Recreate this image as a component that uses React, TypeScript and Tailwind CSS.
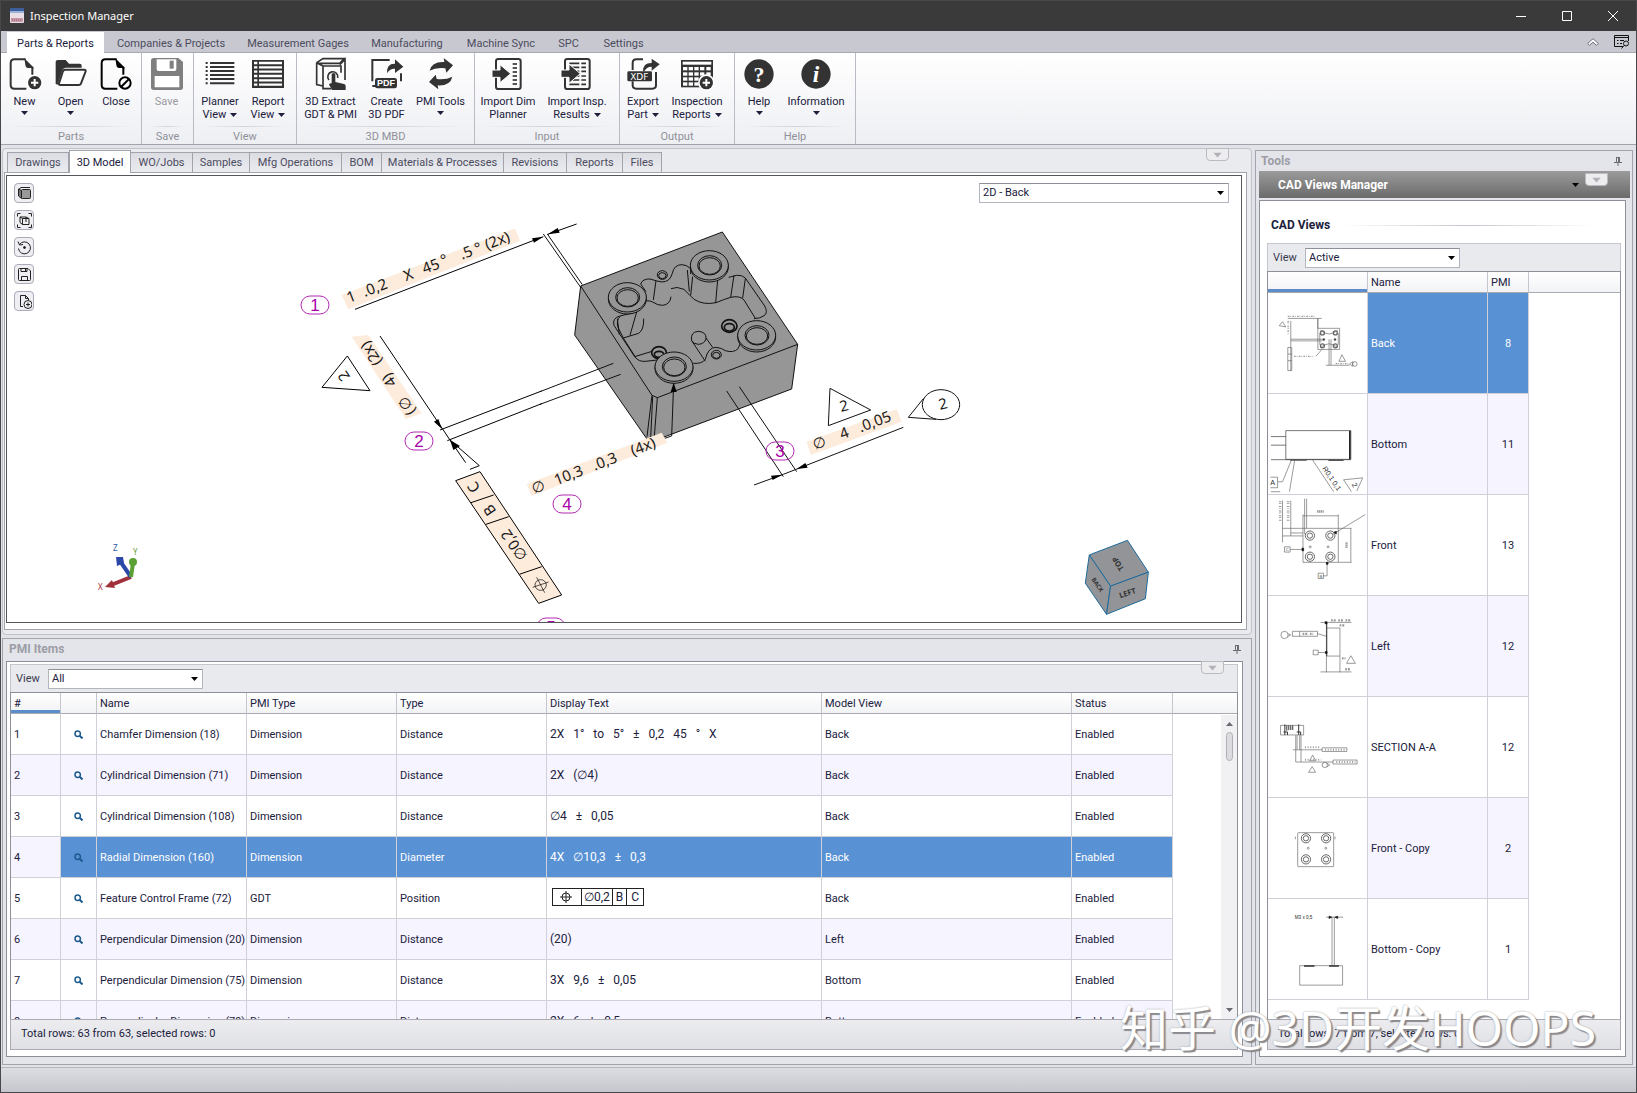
import React, { ReactElement, ReactNode, useState } from 'react'

type IconProps = { children: ReactNode; color?: string }

const RibbonIcon = ({ children, color = '#333333' }: IconProps): ReactElement => (
  <svg viewBox="0 0 96 96" className="size-8 shrink-0 overflow-visible" fill={color} stroke="none" aria-hidden="true">
    {children}
  </svg>
)

const Caret = ({ className = '' }: { className?: string }): ReactElement => (
  <svg viewBox="0 0 7 4" className={`w-[7px] h-1 shrink-0 ${className}`} fill="currentColor" aria-hidden="true">
    <path d="M0 0h7L3.5 4z" />
  </svg>
)

const DocShape = ({ color }: { color: string }): ReactElement => (
  <>
    <path
      d="M50 4H16Q5 4 5 16V80Q5 92 16 92H52M70 26V50"
      fill="none"
      stroke={color}
      strokeWidth="6"
    />
    <path d="M46 1L73 28V34L66 30H56Q49 29 49 21Z" fill={color} />
  </>
)

const ImportArrow = (): ReactElement => (
  <>
    <rect x="12" y="3" width="74" height="90" rx="7" fill="none" stroke="#333" strokeWidth="6" />
    <path d="M0 36h24V20l32 27-32 27V58H0z" stroke="#fff" strokeWidth="3" />
  </>
)

const icons = {
  new: (
    <RibbonIcon>
      <DocShape color="#333333" />
      <circle cx="77" cy="74" r="24" fill="#fff" />
      <circle cx="77" cy="74" r="20" />
      <path d="M77 63v22M66 74h22" stroke="#fff" strokeWidth="6" />
    </RibbonIcon>
  ),
  open: (
    <RibbonIcon>
      <path d="M2 78V12Q2 6 8 6h24l10 11h32q6 0 6 6v6H32q-7 0-10 8L8 80z" />
      <path d="M30 35h58q5 0 4 5L79 74q-2 7-8 7H16q-5 0-4-5l11-34q2-7 7-7z" fill="#fff" stroke="#333" strokeWidth="6" />
    </RibbonIcon>
  ),
  close: (
    <RibbonIcon color="#000000">
      <DocShape color="#000000" />
      <circle cx="75" cy="75" r="23" fill="#fff" />
      <circle cx="75" cy="75" r="17" fill="#fff" stroke="#000" strokeWidth="6" />
      <path d="M87 63L63 87" stroke="#000" strokeWidth="6" />
    </RibbonIcon>
  ),
  save: (
    <RibbonIcon color="#7f7f7f">
      <path d="M8 0h74l14 12v76q0 8-8 8H8q-8 0-8-8V8q0-8 8-8z" />
      <path d="M17 4h59v30q0 5-5 5H22q-5 0-5-5zM11 54h74v34H11z" fill="#fff" />
      <path d="M56 8h12v24H56z" />
    </RibbonIcon>
  ),
  planner: (
    <RibbonIcon>
      {[15, 27, 39, 51, 63, 76].map((y) => (
        <path key={y} d={`M5 ${y}h6M18 ${y}h73`} stroke="#333" strokeWidth="6" />
      ))}
    </RibbonIcon>
  ),
  report: (
    <RibbonIcon>
      <path d="M0 6h96v84H0z" />
      {[13, 26, 39, 52, 65, 78].map((y) => (
        <path key={y} d={`M6 ${y + 2}h10M21 ${y + 2}h69`} stroke="#fff" strokeWidth="7" />
      ))}
    </RibbonIcon>
  ),
  extract: (
    <RibbonIcon>
      <path d="M5 14L24 2H88L74 16H5V80L24 84M5 14L24 24V92H50M24 24H78V44M74 20L90 4V66" fill="none" stroke="#333" strokeWidth="5" />
      <path d="M42 66A15 15 0 1 1 68 60" fill="none" stroke="#333" strokeWidth="5" />
      <path d="M50 48q6-6 11 0v24l26 6q5 1 5 6v12H52L42 80q1-6 8-4z" />
    </RibbonIcon>
  ),
  pdf: (
    <RibbonIcon>
      <path d="M56 6H4V70M4 84h12M90 46V70" fill="none" stroke="#333" strokeWidth="6" />
      <path d="M48 46Q46 16 72 17V4L97 26 72 45V32Q56 31 48 46z" />
      <rect x="12" y="60" width="66" height="31" rx="7" />
      <text x="45" y="85" fill="#fff" fontSize="27" fontWeight="bold" textAnchor="middle" fontFamily="Liberation Sans, sans-serif">PDF</text>
    </RibbonIcon>
  ),
  tools: (
    <RibbonIcon>
      <path d="M14 38Q20 10 58 12L56 0 84 22 64 44 61 31Q32 28 14 38z" />
      <path d="M82 56Q76 84 38 82L40 94 12 72 32 50 35 63Q64 66 82 56z" />
    </RibbonIcon>
  ),
  importDim: (
    <RibbonIcon>
      <ImportArrow />
      {[18, 30, 42, 54, 66, 78].map((y) => (
        <path key={y} d={`M62 ${y}h13`} stroke="#333" strokeWidth="5" />
      ))}
    </RibbonIcon>
  ),
  importInsp: (
    <RibbonIcon>
      <rect x="12" y="3" width="74" height="90" rx="7" fill="none" stroke="#333" strokeWidth="6" />
      {[16, 28, 40, 54, 66, 79].map((y) => (
        <path key={y} d={`M25 ${y}h30M61 ${y}h14`} stroke="#333" strokeWidth="5" />
      ))}
      <path d="M0 36h24V18l34 29-34 29V58H0z" stroke="#fff" strokeWidth="3" />
    </RibbonIcon>
  ),
  exportPart: (
    <RibbonIcon>
      <path d="M48 4H28Q17 4 17 15V36M17 70V82Q17 92 28 92H76Q87 92 87 82V42" fill="none" stroke="#333" strokeWidth="6" />
      <path d="M48 40Q48 14 74 15V2L98 19 74 38V26Q58 26 52 40z" />
      <rect x="1" y="40" width="74" height="30" rx="4" />
      <text x="37" y="65" fill="#fff" fontSize="27" textAnchor="middle" fontFamily="DejaVu Sans, sans-serif">XDF</text>
    </RibbonIcon>
  ),
  inspection: (
    <RibbonIcon>
      <path d="M0 6h96v82H0z" />
      <path d="M5 11h86v9H5z" fill="#fff" />
      {[27, 43, 58, 73].map((y) =>
        [6, 23, 40, 57, 76].map((x) => <rect key={`${x}-${y}`} x={x} y={y} width="13" height="10" fill="#fff" />)
      )}
      <circle cx="76" cy="74" r="25" fill="#fff" />
      <circle cx="76" cy="74" r="20" />
      <path d="M76 63v22M65 74h22" stroke="#fff" strokeWidth="6" />
    </RibbonIcon>
  ),
  help: (
    <RibbonIcon>
      <circle cx="48" cy="48" r="44" />
      <text x="48" y="71" fill="#fff" fontSize="66" fontWeight="bold" textAnchor="middle" fontFamily="Liberation Serif, serif">?</text>
    </RibbonIcon>
  ),
  info: (
    <RibbonIcon>
      <circle cx="48" cy="48" r="44" />
      <text x="48" y="72" fill="#fff" fontSize="70" fontWeight="bold" fontStyle="italic" textAnchor="middle" fontFamily="Liberation Serif, serif">i</text>
    </RibbonIcon>
  ),
}

type RibbonItem = { icon: ReactNode; lines: string[]; menu?: boolean; width: string; disabled?: boolean }

const ribbonGroups: { name: string; width: string; items: RibbonItem[] }[] = [
  {
    name: 'Parts',
    width: 'w-[141px]',
    items: [
      { icon: icons.new, lines: ['New'], menu: true, width: 'w-[46px]' },
      { icon: icons.open, lines: ['Open'], menu: true, width: 'w-[46px]' },
      { icon: icons.close, lines: ['Close'], width: 'w-[45px]' },
    ],
  },
  { name: 'Save', width: 'w-[52px]', items: [{ icon: icons.save, lines: ['Save'], width: 'w-12', disabled: true }] },
  {
    name: 'View',
    width: 'w-[103px]',
    items: [
      { icon: icons.planner, lines: ['Planner', 'View'], menu: true, width: 'w-12' },
      { icon: icons.report, lines: ['Report', 'View'], menu: true, width: 'w-12' },
    ],
  },
  {
    name: '3D MBD',
    width: 'w-[178px]',
    items: [
      { icon: icons.extract, lines: ['3D Extract', 'GDT & PMI'], width: 'w-[62px]' },
      { icon: icons.pdf, lines: ['Create', '3D PDF'], width: 'w-[50px]' },
      { icon: icons.tools, lines: ['PMI Tools'], menu: true, width: 'w-[58px]' },
    ],
  },
  {
    name: 'Input',
    width: 'w-[145px]',
    items: [
      { icon: icons.importDim, lines: ['Import Dim', 'Planner'], width: 'w-[62px]' },
      { icon: icons.importInsp, lines: ['Import Insp.', 'Results'], menu: true, width: 'w-[76px]' },
    ],
  },
  {
    name: 'Output',
    width: 'w-[115px]',
    items: [
      { icon: icons.exportPart, lines: ['Export', 'Part'], menu: true, width: 'w-[42px]' },
      { icon: icons.inspection, lines: ['Inspection', 'Reports'], menu: true, width: 'w-[66px]' },
    ],
  },
  {
    name: 'Help',
    width: 'w-[121px]',
    items: [
      { icon: icons.help, lines: ['Help'], menu: true, width: 'w-[44px]' },
      { icon: icons.info, lines: ['Information'], menu: true, width: 'w-[70px]' },
    ],
  },
]

const ribbonTabs = [
  { name: 'Companies & Projects', width: 'w-[134px]' },
  { name: 'Measurement Gages', width: 'w-[120px]' },
  { name: 'Manufacturing', width: 'w-[98px]' },
  { name: 'Machine Sync', width: 'w-[90px]' },
  { name: 'SPC', width: 'w-[45px]' },
  { name: 'Settings', width: 'w-[65px]' },
]

const docTabs = [
  { name: 'Drawings', width: 'w-[62px]' },
  { name: '3D Model', width: 'w-[62px]' },
  { name: 'WO/Jobs', width: 'w-[62px]' },
  { name: 'Samples', width: 'w-[57px]' },
  { name: 'Mfg Operations', width: 'w-[92px]' },
  { name: 'BOM', width: 'w-10' },
  { name: 'Materials & Processes', width: 'w-[122px]' },
  { name: 'Revisions', width: 'w-[63px]' },
  { name: 'Reports', width: 'w-[56px]' },
  { name: 'Files', width: 'w-[39px]' },
]

const pmiItems = [
  { id: 1, name: 'Chamfer Dimension (18)', kind: 'Dimension', type: 'Distance', text: '2X   1°   to   5°   ±   0,2   45   °   X', view: 'Back' },
  { id: 2, name: 'Cylindrical Dimension (71)', kind: 'Dimension', type: 'Distance', text: '2X   (∅4)', view: 'Back' },
  { id: 3, name: 'Cylindrical Dimension (108)', kind: 'Dimension', type: 'Distance', text: '∅4   ±   0,05', view: 'Back' },
  { id: 4, name: 'Radial Dimension (160)', kind: 'Dimension', type: 'Diameter', text: '4X   ∅10,3   ±   0,3', view: 'Back' },
  { id: 5, name: 'Feature Control Frame (72)', kind: 'GDT', type: 'Position', text: '', view: 'Back' },
  { id: 6, name: 'Perpendicular Dimension (20)', kind: 'Dimension', type: 'Distance', text: '(20)', view: 'Left' },
  { id: 7, name: 'Perpendicular Dimension (75)', kind: 'Dimension', type: 'Distance', text: '3X   9,6   ±   0,05', view: 'Bottom' },
  { id: 8, name: 'Perpendicular Dimension (79)', kind: 'Dimension', type: 'Distance', text: '2X   6   ±   0,5', view: 'Bottom' },
]

const Bore = ({ x, y }: { x: number; y: number }): ReactElement => (
  <g>
    <ellipse cx={x} cy={y + 5} rx="57" ry="45" />
    <ellipse cx={x} cy={y} rx="57" ry="44" />
    <ellipse cx={x + 1} cy={y} rx="36" ry="29" />
    <ellipse cx={x + 1} cy={y + 2} rx="32" ry="25" />
  </g>
)

const Balloon = ({ x, y, n }: { x: number; y: number; n: number }): ReactElement => (
  <g>
    <rect x={x - 14} y={y - 9} width="28" height="18" rx="9" fill="none" stroke="#b429b4" />
    <text x={x} y={y + 6} fontSize="17" textAnchor="middle" fill="#a800a8" fontFamily="Liberation Sans, sans-serif">
      {n}
    </text>
  </g>
)

const Scene = (): ReactElement => (
  <svg
    viewBox="7 176 1000 446"
    width="1000"
    height="446"
    className="absolute left-0 top-0 max-w-none"
    fontFamily="Noto Sans, Open Sans, sans-serif"
    fontSize="15"
    fill="#1a1a1a"
    role="img"
    aria-label="Back view of the part with its dimensions"
  >
    {/* block */}
    <g transform="translate(540 210) scale(0.33333)" stroke="#111" strokeWidth="3" fill="none" strokeLinejoin="round">
      <path d="M122 228L547 66 773 403 755 537 375 680 323 690 104 375z" fill="#969696" />
      <path d="M122 228L336 556 352 563 773 403M336 556L321 680M352 563L343 680M338 560L332 685" />
      <path d="M10 72L122 232M22 72L127 224" />
      <path d="M302 222Q308 206 330 207Q352 214 366 216Q390 216 397 190Q402 164 426 164Q440 164 452 176M302 222L318 245M348 212L340 270M318 272Q334 272 342 278Q352 286 368 286Q390 284 393 260M393 236Q410 228 432 238Q446 252 462 268Q490 286 528 278Q552 268 572 262Q600 256 612 270L646 325M452 176V192M442 180L448 245M458 200L452 256M533 210L527 278M566 202L590 196Q606 194 616 204L674 288Q684 306 674 316Q660 326 642 326M582 196L572 262M616 206L608 264" />
      <path d="M290 306L240 318Q216 324 222 346L284 440Q296 456 316 454L352 450M232 326L238 374M240 320Q228 330 234 352L250 384 296 370Q312 360 311 326M290 306L270 376M250 384L284 438M284 440L336 424" />
      <path d="M455 392Q450 366 475 364Q500 366 498 386Q494 402 475 403Q460 402 455 392M455 392L496 454M498 384L518 412M460 460Q486 462 496 448Q504 412 528 412Q546 414 556 422Q580 430 594 416Q604 404 598 386" />
      <ellipse cx="367" cy="195" rx="15" ry="13" />
      <ellipse cx="367" cy="197" rx="11" ry="9" />
      <ellipse cx="529" cy="434" rx="15" ry="13" />
      <ellipse cx="529" cy="436" rx="11" ry="9" />
      <g strokeWidth="5">
        <ellipse cx="568" cy="348" rx="23" ry="19" />
        <ellipse cx="568" cy="352" rx="15" ry="11" />
        <ellipse cx="357" cy="428" rx="22" ry="18" />
        <ellipse cx="357" cy="433" rx="14" ry="9" />
      </g>
      <g fill="#969696">
        <Bore x={262} y={262} />
        <Bore x={508} y={166} />
        <Bore x={650} y={376} />
        <Bore x={402} y={470} />
      </g>
      <path d="M0 545L220 460M0 583L242 493" />
      <path d="M560 543L730 800M598 530L770 785M642 825L730 793 1090 652" />
      <path d="M401 520L395 678 365 688" />
      <path d="M401 518l-9 28h18zM770 777l26-18 7 14zM727 794l-34 3 5 13z" fill="#000" stroke="none" />
      <path d="M870 535L992 600 865 647z" />
      <ellipse cx="1203" cy="584" rx="56" ry="45" />
      <path d="M1150 566L1105 622 1188 628" />
    </g>

    {/* highlighted dimension texts */}
    <g transform="translate(280 200) scale(0.33333)" stroke="none" fill="#fdebdc">
      <path d="M185 285L705 85 720 122 205 328zM215 410L265 405 425 640 378 658z" />
      <path d="M740 852L1145 698 1162 728 755 888z" />
      <path d="M1580 725L1850 628 1865 665 1592 765z" />
      <path d="M527 842L600 815 845 1185 776 1210z" />
    </g>
    <g transform="translate(280 200) scale(0.33333)" stroke="#000" strokeWidth="3" fill="none">
      <path d="M225 328L790 110M803 103L890 72M300 408L510 720 557 788M480 690L785 573M502 722L785 611M510 720L598 797 570 808" />
      <path d="M790 110l-34 5 6 13zM803 103l30-19 6 14zM486 687l-24-22 13-8zM510 720l10 30 20-12z" fill="#000" stroke="none" />
      <path d="M202 468L126 562 270 572z" />
      <path d="M527 842L600 815 845 1185 776 1210zM573 908L641 885M618 973L686 950M718 1123L785 1100" />
      <ellipse cx="782" cy="1155" rx="17" ry="16" strokeWidth="2" />
      <path d="M758 1162L806 1146M770 1132L794 1178" strokeWidth="2" />
    </g>
    <g transform="translate(349 303) rotate(-21)">
      <text x="0" y="0">1</text>
      <text x="17" y="0">.0,2</text>
      <text x="61" y="0">X</text>
      <text x="81" y="0">45</text>
      <text x="101" y="-1">°</text>
      <text x="121" y="0">.5</text>
      <text x="137" y="0">°</text>
      <text x="148" y="0">(2x)</text>
    </g>
    <g transform="translate(416 411) rotate(-124)">
      <text x="0" y="0">(</text>
      <text x="6" y="0">∅</text>
      <text x="34" y="0">4)</text>
      <text x="60" y="0">(2x)</text>
    </g>
    <g transform="translate(534 494) rotate(-21)">
      <text x="0" y="0">∅</text>
      <text x="24" y="0">10,3</text>
      <text x="65" y="0">.0,3</text>
      <text x="106" y="0">(4x)</text>
    </g>
    <g transform="translate(815 450) rotate(-21)">
      <text x="0" y="0">∅</text>
      <text x="29" y="0">4</text>
      <text x="49" y="0">.0,05</text>
    </g>
    <g textAnchor="middle">
      <text transform="translate(344 376) rotate(-124)" y="5">2</text>
      <text transform="translate(844 406) rotate(-14)" y="5">2</text>
      <text transform="translate(943 404) rotate(-14)" y="5">2</text>
      <text transform="translate(474 487) rotate(-124)" y="5">C</text>
      <text transform="translate(490 510) rotate(-124)" y="5">B</text>
      <text transform="translate(514 545) rotate(-124)" y="5">∅0,2</text>
    </g>
    <Balloon x={315} y={305} n={1} />
    <Balloon x={419} y={441} n={2} />
    <Balloon x={780} y={451} n={3} />
    <Balloon x={567} y={504} n={4} />
    <Balloon x={551} y={627} n={5} />
  </svg>
)

const AxisTriad = (): ReactElement => (
  <svg viewBox="90 540 60 60" width="60" height="60" className="absolute left-[84px] bottom-[22px]" fontSize="8" fontFamily="Noto Sans, sans-serif" aria-hidden="true">
    <path d="M130 577L110 585" stroke="#a0303c" strokeWidth="4" />
    <path d="M104 587l7-7 3 8z" fill="#a0303c" />
    <path d="M130 577L119 561" stroke="#2b47a8" strokeWidth="4" />
    <path d="M115 557l7 0 1 6-7 3z" fill="#2b47a8" />
    <path d="M130 577L132 563" stroke="#5aa032" strokeWidth="4" />
    <ellipse cx="132" cy="562" rx="4" ry="4" fill="#5aa032" />
    <text x="97" y="590" fill="#a0303c">X</text>
    <text x="112" y="551" fill="#2b5aa8">Z</text>
    <text x="132" y="555" fill="#6aa03c">Y</text>
  </svg>
)

const NavCube = (): ReactElement => (
  <svg viewBox="60 40 220 260" width="73" height="87" className="absolute right-[88px] bottom-[2px]" fontSize="23" fontWeight="bold" fontFamily="Noto Sans, sans-serif" fill="#333" textAnchor="middle" aria-label="View cube">
    <g fill="#929497" stroke="#1d6a9c" strokeWidth="3" strokeLinejoin="round">
      <path d="M88 105L203 61 266 157 152 199z" />
      <path d="M88 105L76 190 140 284 152 199z" />
      <path d="M152 199L140 284 257 237 266 157z" />
    </g>
    <text transform="translate(174 132) rotate(-122)" y="9">TOP</text>
    <text transform="translate(114 194) rotate(55)" y="8" fontSize="18">BACK</text>
    <text transform="translate(203 219) rotate(-18)" y="9">LEFT</text>
  </svg>
)

const Ring = ({ x, y }: { x: number; y: number }): ReactElement => (
  <>
    <circle cx={x} cy={y} r="14" strokeWidth="3" />
    <circle cx={x} cy={y} r="8" strokeWidth="3" />
  </>
)

const Thumb = ({ box, children }: { box: string; children: ReactNode }): ReactElement => (
  <svg viewBox={box} width="99" height="99" className="block" fill="none" stroke="#666" strokeWidth="2" fontFamily="Liberation Sans, sans-serif" aria-hidden="true">
    {children}
  </svg>
)

const cadViews = [
  {
    name: 'Back',
    pmi: 8,
    thumb: (
      <Thumb box="53 68 300 300">
        <path d="M113 142H216M204 142V236H270V172H204M122 205H218M122 210H218M122 150V300M204 172L204 142M238 205V284M244 205V284M228 284H300M216 236L198 257" />
        <path d="M113 136H196M132 257H190M258 279H296M114 150V190" stroke="#999" strokeWidth="4" strokeDasharray="5 3 2 4" />
        <path d="M113 230H125V300H113zM113 250H125M113 270H125M97 152L87 164 107 168zM277 252L268 272H288zM300 280L310 273V287z" />
        <circle cx="316" cy="280" r="7" />
        <path d="M212 178Q238 200 264 178M212 230Q238 208 264 230M210 186V222M266 186V222" />
        {[[218, 186], [257, 186], [218, 225], [257, 225]].map(([x, y]) => (
          <circle key={`${x}-${y}`} cx={x} cy={y} r="6" strokeWidth="4" />
        ))}
        <circle cx="222" cy="206" r="3" fill="#222" />
        <circle cx="256" cy="206" r="3" fill="#222" />
      </Thumb>
    ),
  },
  {
    name: 'Bottom',
    pmi: 11,
    thumb: (
      <Thumb box="53 371 300 300">
        <path d="M62 497H107M62 523H107M62 567H304M107 479H304V566H107z" stroke="#333" />
        <path d="M301 479V566" stroke="#222" strokeWidth="5" />
        <path d="M120 568H170M236 569H282" stroke="#555" strokeWidth="4" />
        <path d="M124 568L97 634H82M134 568L118 664M188 568L252 664M60 620H82V652H60M282 628L340 622 322 662M282 628L306 664M62 664H90" />
        <g fill="#333" stroke="none" fontSize="22">
          <text x="60" y="644">A</text>
          <text transform="translate(217 594) rotate(56)">R0,1  0,1</text>
          <text transform="translate(306 642) rotate(60)">2</text>
        </g>
      </Thumb>
    ),
  },
  {
    name: 'Front',
    pmi: 13,
    thumb: (
      <Thumb box="53 674 300 300">
        <path d="M159 772H266V875H159zM159 772V730M266 772V730M159 734H266M164 682V790M170 682V772M266 772H306M266 875H306M304 772V875M97 688V815M122 688V795M97 772H159M97 795H159M122 786H159M250 790L348 730M103 828H120V844H103zM120 836H158M205 908H221V924H205zM221 916H232V876" />
        <path d="M90 690V752M114 690V752" stroke="#999" strokeWidth="8" strokeDasharray="3 3 2 6" />
        <path d="M202 721H222M291 815V833" stroke="#888" strokeWidth="7" strokeDasharray="4 2" />
        <path d="M156 832h5v8h-5zM230 875h5v6h-5zM252 784l8-3v8z" fill="#111" stroke="#111" />
        <Ring x={180} y={794} />
        <Ring x={242} y={794} />
        <Ring x={180} y={858} />
        <Ring x={242} y={858} />
        <circle cx="181" cy="828" r="3" />
        <circle cx="235" cy="828" r="3" />
        <g fill="#555" stroke="none" fontSize="13">
          <text x="107" y="841">C</text>
          <text x="209" y="921">B</text>
        </g>
      </Thumb>
    ),
  },
  {
    name: 'Left',
    pmi: 12,
    thumb: (
      <Thumb box="53 17 300 300">
        <path d="M230 94V245M271 111V245M230 111H271M230 196H271M212 94H306M212 244H306M203 128L230 136M127 121H203V136H127zM149 121V136M190 178H205V192H190zM205 185H230M304 195L291 218H318z" />
        <path d="M231 96V196" stroke="#333" strokeWidth="3" />
        <circle cx="103" cy="132" r="11" />
        <path d="M113 128L122 132 113 137" />
        <path d="M244 88H304M158 129H190M270 103H286M277 203H288M287 236H302" stroke="#999" strokeWidth="7" strokeDasharray="5 3 6 8" />
        <path d="M226 92h6v6h-6zM227 182h5v6h-5z" fill="#111" stroke="#111" />
      </Thumb>
    ),
  },
  {
    name: 'SECTION A-A',
    pmi: 12,
    thumb: (
      <Thumb box="53 321 300 300">
        <path d="M91 404H161V433H91zM137 434V515M141 434V478M149 434V478M153 434V515M128 478H217M137 515H250M217 472H292V483H217zM250 509H323V521H250zM188 494L179 511H197zM187 529L176 546H197z" />
        <path d="M104 401V433M110 404V420M116 404V418M122 404V418M128 404V418M146 401V433M100 424H112V433M140 424H152V433" stroke="#333" strokeWidth="3" />
        <path d="M165 470H212M165 508H214M226 478H286M260 515H318" stroke="#999" strokeWidth="6" strokeDasharray="3 5" />
        <circle cx="225" cy="524" r="8" />
        <path d="M231 518L240 524 231 530" />
      </Thumb>
    ),
  },
  {
    name: 'Front - Copy',
    pmi: 2,
    thumb: (
      <Thumb box="53 624 300 300">
        <rect x="143" y="726" width="109" height="103" rx="2" />
        <Ring x={168} y={743} />
        <Ring x={229} y={743} />
        <Ring x={168} y={807} />
        <Ring x={229} y={807} />
        <circle cx="175" cy="773" r="3" />
        <circle cx="228" cy="773" r="3" />
        <path d="M136 738V746M256 738V746" />
      </Thumb>
    ),
  },
  {
    name: 'Bottom - Copy',
    pmi: 1,
    thumb: (
      <Thumb box="53 927 300 300">
        <path d="M149 1126H279V1185H149zM247 978V1126M254 978V1126M229 979H281" />
        <path d="M162 1127H194M238 1127H268" stroke="#333" strokeWidth="4" />
        <path d="M238 976l8 3-8 4zM264 976l-8 3 8 4z" fill="#111" stroke="#111" />
        <text x="134" y="984" fontSize="14" fill="#222" stroke="none">M3 x 0,5</text>
      </Thumb>
    ),
  },
]

const Picker = ({ id, label, value, options, className = '' }: { id: string; label: string; value: string; options: string[]; className?: string }): ReactElement => (
  <div className={`relative h-5 border border-[#b4b6bf] border-t-[#8e9099] bg-white ${className}`}>
    <select id={id} aria-label={label} defaultValue={value} className="block h-full w-full appearance-none bg-transparent pl-[3px] pr-5 text-[11px] leading-[18px] text-[#20203c] outline-none">
      {options.map((o) => (
        <option key={o}>{o}</option>
      ))}
    </select>
    <Caret className="pointer-events-none absolute right-1 top-[7px] text-black" />
  </div>
)

const Pin = (): ReactElement => (
  <svg viewBox="0 0 8 9" className="w-2 h-[9px]" fill="none" stroke="#6a6c74" aria-hidden="true">
    <path d="M2 .5h4M2.500 0v5M5.500 0v5M4.500 0v5M0 5.500h8M4 6v3" />
  </svg>
)

const DropHandle = ({ className = '' }: { className?: string }): ReactElement => (
  <button type="button" aria-label="Expand" className={`flex h-[13px] w-[23px] items-center justify-center rounded-b-sm border border-[#babac0] bg-[#ededf0] text-[#b2b3b8] ${className}`}>
    <Caret className="scale-125" />
  </button>
)

const toolButtons = [
  {
    name: 'Shaded',
    icon: (
      <>
        <path d="M1.500 3.500L4 1.500H13" />
        <path d="M1.500 3V10L4.500 12.500V4.500z" fill="#777" />
        <rect x="4.500" y="3.500" width="9" height="9" rx="1" fill="#999" />
      </>
    ),
  },
  {
    name: 'Fit',
    icon: (
      <>
        <path d="M.5 3.500V.5H3.500M11.500.5H14.500V3.500M14.500 11.500V14.500H11.500M3.500 14.500H.5V11.500" />
        <path d="M3 4H9L12 5.500V11.500H5.500L3 9.500zM3 4L5.500 5.500H12M5.500 5.500V11.500M9 4V9" />
      </>
    ),
  },
  {
    name: 'Reset rotation',
    icon: (
      <>
        <path d="M2.500 4.500A6 6 0 1 1 1.500 8.500M1 1.500L2.500 5 6 4.500" />
        <circle cx="7.500" cy="7.500" r="1" fill="#222" />
      </>
    ),
  },
  {
    name: 'Save view',
    icon: <path d="M1.500 2.500Q1.500 1.500 2.500 1.500H11L13.500 4V12.500Q13.500 13.500 12.500 13.500H2.500Q1.500 13.500 1.500 12.500zM4 1.500V4.500H10V1.500M8.500 2V4M4.500 13.500V9.500H10.500V13.500" />,
  },
  {
    name: 'Add page',
    icon: (
      <>
        <path d="M6 12.500H3.500V1.500H8.500L11.500 4.500V6M8.500 1.500V4.500H11.500" />
        <circle cx="11" cy="10.500" r="4" />
        <path d="M11 8.500V12.500M9 10.500H13" />
      </>
    ),
  },
]

const Ribbon = (): ReactElement => (
  <>
    <nav className="flex h-[22px] shrink-0 items-end border-b border-[#a9a9b2] bg-[#c8c8d1] pl-1.5 text-[#4c4c5e]">
      <button type="button" className="-mb-px h-[21px] w-[97px] bg-white pt-0.5 text-[#20203c]">Parts &amp; Reports</button>
      {ribbonTabs.map((t) => (
        <button key={t.name} type="button" className={`h-[21px] pt-[3px] ${t.width}`}>{t.name}</button>
      ))}
      <div className="ml-auto flex h-full items-center gap-[15px] pr-1.5">
        <button type="button" aria-label="Collapse ribbon">
          <svg viewBox="0 0 12 8" className="h-2 w-3" fill="#fff" stroke="#6b6b82" aria-hidden="true">
            <path d="M.7 5.500L6 .7l5.300 4.800L9.500 7.300 6 4.200 2.500 7.300z" />
          </svg>
        </button>
        <button type="button" aria-label="Find window">
          <svg viewBox="0 0 16 14" className="h-3.5 w-4" fill="none" stroke="#111" aria-hidden="true">
            <path d="M9 11.500H.5V.5H14.500V6M.5 2.500H14.500M3 5.500H4.500M6 5.500H10M3 8.500H4.500M6 8.500H8" />
            <circle cx="12" cy="8.500" r="2.500" />
            <path d="M10 10.500L7.500 13.500" />
          </svg>
        </button>
      </div>
    </nav>
    <div className="flex h-[92px] shrink-0 border-b border-[#a2a3ab] bg-linear-to-b from-white to-[#eeeff3]">
      {ribbonGroups.map((g) => (
        <section key={g.name} aria-label={g.name} className={`flex flex-col border-r border-[#babbc4] ${g.width}`}>
          <div className="flex flex-1 justify-center pr-0.5">
            {g.items.map((item) => (
              <button
                key={item.lines.join(' ')}
                type="button"
                disabled={item.disabled}
                className={`flex flex-col items-center pt-[5px] ${item.width} ${item.disabled ? 'text-[#9a9aa2]' : 'text-[#20203c]'}`}
              >
                {item.icon}
                <span className="mt-[5px] whitespace-nowrap leading-[13px]">{item.lines[0]}</span>
                {item.lines[1] && (
                  <span className="flex items-center gap-1 whitespace-nowrap leading-[13px]">
                    {item.lines[1]}
                    {item.menu && <Caret />}
                  </span>
                )}
                {item.menu && !item.lines[1] && <Caret className="mt-[3px]" />}
              </button>
            ))}
          </div>
          <div className="mx-2 h-px bg-linear-to-r from-transparent via-[#d2d3da] to-transparent" />
          <h2 className="h-[17px] pt-[3px] text-center text-[#8f9099]">{g.name}</h2>
        </section>
      ))}
    </div>
  </>
)

const ModelPanel = (): ReactElement => (
  <section className="relative flex min-h-0 flex-col rounded-sm border border-[#c0c1ca] bg-[#eaebef] pb-1 pl-px pr-1 pt-px">
    <DropHandle className="absolute right-[22px] -top-px" />
    <div className="relative z-10 -mb-px flex items-end pl-[3px] text-[#4c4c5e]">
      {docTabs.map((t) =>
        t.name === '3D Model' ? (
          <button key={t.name} type="button" className={`h-[23px] border border-b-0 border-[#a2a3ab] bg-white text-[#20203c] ${t.width}`}>{t.name}</button>
        ) : (
          <button key={t.name} type="button" className={`h-[21px] border border-l-0 border-[#a2a3ab] bg-linear-to-b from-[#dcdde3] to-[#ebecf0] first:border-l ${t.width}`}>{t.name}</button>
        )
      )}
    </div>
    <div className="flex min-h-0 flex-1 border border-[#a2a3ab] bg-white pb-1.5 pl-px pr-1 pt-0.5">
      <div className="relative flex-1 overflow-hidden border border-[#55565c] bg-white">
        <Scene />
        <AxisTriad />
        <NavCube />
        <div className="relative flex items-start justify-between pl-[7px] pr-3 pt-[7px]">
          <div className="flex flex-col gap-[7px]">
            {toolButtons.map((b) => (
              <button key={b.name} type="button" aria-label={b.name} className="flex size-5 items-center justify-center rounded-sm border border-[#a9aab8] bg-[#eeeef3]">
                <svg viewBox="0 0 15 15" className="size-[15px]" fill="none" stroke="#222" aria-hidden="true">{b.icon}</svg>
              </button>
            ))}
          </div>
          <Picker id="scene-view" label="Model view" value="2D - Back" options={['2D - Back', '2D - Bottom', '2D - Front', '2D - Left']} className="w-[250px]" />
        </div>
      </div>
    </div>
  </section>
)

const FrameSymbol = (): ReactElement => (
  <span className="ml-0.5 inline-flex h-[18px] items-stretch border border-[#222] leading-4">
    <svg viewBox="0 0 28 16" className="h-4 w-7" fill="none" stroke="#222" aria-hidden="true">
      <circle cx="13" cy="8" r="4" />
      <path d="M7 8H19M13 2V14" />
    </svg>
    <span className="border-l border-[#222] px-0.5">∅0,2</span>
    <span className="border-l border-[#222] px-[3px]">B</span>
    <span className="border-l border-[#222] px-1">C</span>
  </span>
)

const PmiPanel = (): ReactElement => {
  const [selected, setSelected] = useState(4)
  const head = 'border-b border-r border-[#c4c5cd] border-b-[#a9aab2] px-[3px] text-left font-normal'

  return (
    <section className="flex min-h-0 flex-col border border-[#a2a3ab] bg-[#e4e5ea] pb-[7px] pl-[3px] pr-0.5">
      <header className="flex h-[22px] shrink-0 items-center justify-between pb-0.5 pl-[3px] pr-2">
        <h2 className="text-[12px] font-bold text-[#9c9da6]">PMI Items</h2>
        <button type="button" aria-label="Pin PMI Items"><Pin /></button>
      </header>
      <div className="relative mr-1.5 flex min-h-0 flex-1 flex-col border border-[#8e9099] bg-white pb-1.5 pl-[3px] pr-1 pt-0.5">
        <DropHandle className="absolute right-[18px] -top-px" />
        <div className="flex h-[28px] shrink-0 items-center border border-[#c4c5cd] border-b-0 bg-[#e9eaee] pl-[5px]">
          <label htmlFor="pmi-view" className="w-8 text-[#3a3a50]">View</label>
          <Picker id="pmi-view" label="View" value="All" options={['All', 'Active']} className="w-[155px]" />
        </div>
        <div className="relative min-h-0 flex-1 overflow-hidden border border-b-0 border-[#8e9099]">
          <table className="w-full table-fixed border-separate border-spacing-0">
            <colgroup>
              <col className="w-[50px]" />
              <col className="w-9" />
              <col className="w-[150px]" />
              <col className="w-[150px]" />
              <col className="w-[150px]" />
              <col className="w-[275px]" />
              <col className="w-[250px]" />
              <col className="w-[101px]" />
              <col />
            </colgroup>
            <thead>
              <tr className="h-[21px] bg-linear-to-b from-white to-[#f1f2f5]">
                <th scope="col" className={`${head} shadow-[inset_0_-3px_0_#5b8dca]`}>#</th>
                <th scope="col" className={head} aria-label="Find" />
                <th scope="col" className={head}>Name</th>
                <th scope="col" className={head}>PMI Type</th>
                <th scope="col" className={head}>Type</th>
                <th scope="col" className={head}>Display Text</th>
                <th scope="col" className={head}>Model View</th>
                <th scope="col" className={head}>Status</th>
                <td className="border-b border-[#a9aab2]" />
              </tr>
            </thead>
            <tbody>
              {pmiItems.map((item) => {
                const active = item.id === selected
                const stripe = item.id % 2 === 0 ? 'bg-[#f6f4fe]' : 'bg-white'
                const cell = `border-b border-r border-[#d0d0d8] px-[3px] whitespace-nowrap ${active ? 'bg-[#5891d4] text-white' : stripe}`
                return (
                  <tr key={item.id} className="h-[41px]" onClick={() => setSelected(item.id)}>
                    <td className={`border-b border-r border-[#d0d0d8] px-[3px] ${stripe}`}>{item.id}</td>
                    <td className={cell}>
                      <button type="button" aria-label={`Find ${item.name}`} className="mx-auto block">
                        <svg viewBox="0 0 9 9" className="size-[9px]" fill="none" stroke="#1d5a8e" aria-hidden="true">
                          <circle cx="3.700" cy="3.700" r="2.700" strokeWidth="1.500" />
                          <path d="M5.700 5.700L8.500 8.500" strokeWidth="2" />
                        </svg>
                      </button>
                    </td>
                    <td className={cell}>{item.name}</td>
                    <td className={cell}>{item.kind}</td>
                    <td className={cell}>{item.type}</td>
                    <td className={`${cell} whitespace-pre font-['Roboto','Noto_Sans',sans-serif] text-[12px]`}>{item.text || <FrameSymbol />}</td>
                    <td className={cell}>{item.view}</td>
                    <td className={cell}>Enabled</td>
                    <td />
                  </tr>
                )
              })}
            </tbody>
          </table>
          <div className="absolute bottom-0 right-0 top-[22px] flex w-4 flex-col items-center bg-[#f1f1f4] py-[7px] text-[#6a6a72]">
            <Caret className="rotate-180" />
            <div className="mt-[6px] h-[29px] w-[7px] rounded-full border border-[#b0b0b6] bg-[#dcdce0]" />
            <Caret className="mt-auto" />
          </div>
        </div>
        <footer className="h-[31px] shrink-0 border border-[#a9aab2] bg-linear-to-b from-[#ededf0] to-[#dfe0e5] pl-2.5 leading-[27px]">
          Total rows: 63 from 63, selected rows: 0
        </footer>
      </div>
    </section>
  )
}

const ToolsPanel = (): ReactElement => {
  const head = 'border-b border-r border-[#c4c5cd] border-b-[#a9aab2] px-[3px] text-left font-normal'

  return (
    <aside className="mt-0.5 flex w-[378px] shrink-0 flex-col border border-[#a2a3ab] bg-[#e4e5ea] pb-[7px] pl-[3px] pr-0.5">
      <header className="flex h-5 shrink-0 items-center justify-between pl-0.5 pr-2">
        <h2 className="text-[12px] font-bold text-[#9c9da6]">Tools</h2>
        <button type="button" aria-label="Pin Tools"><Pin /></button>
      </header>
      <div className="flex h-[27px] shrink-0 items-start bg-linear-to-b from-[#9b9b9b] to-[#6b6b6b] pl-[19px] pr-[22px]">
        <h3 className="text-[12px] font-bold leading-7 text-white">CAD Views Manager</h3>
        <Caret className="ml-auto mr-1.5 mt-3 text-black" />
        <DropHandle className="mt-0.5" />
      </div>
      <div className="mr-1 mt-0.5 flex min-h-0 flex-1 flex-col border border-[#8e9099] bg-white pb-1.5 pl-[7px] pr-1">
        <div className="flex h-[42px] shrink-0 items-center gap-3 pl-1 pt-1.5">
          <h3 className="text-[12px] font-bold text-[#20203c]">CAD Views</h3>
          <div className="mr-7 h-px flex-1 bg-linear-to-r from-transparent via-[#c4c5cd] to-transparent" />
        </div>
        <div className="flex h-7 shrink-0 items-center border border-b-0 border-[#c4c5cd] bg-[#e9eaee] pl-[5px]">
          <label htmlFor="cad-view" className="w-8 text-[#3a3a50]">View</label>
          <Picker id="cad-view" label="View" value="Active" options={['Active', 'All']} className="w-[155px]" />
        </div>
        <div className="min-h-0 flex-1 overflow-hidden border border-b-0 border-[#8e9099]">
          <table className="w-full table-fixed border-separate border-spacing-0">
            <colgroup>
              <col className="w-[100px]" />
              <col className="w-[120px]" />
              <col className="w-[41px]" />
              <col />
            </colgroup>
            <thead>
              <tr className="h-[21px] bg-linear-to-b from-white to-[#f1f2f5]">
                <th scope="col" aria-label="Preview" className={`${head} shadow-[inset_0_-3px_0_#5b8dca]`} />
                <th scope="col" className={head}>Name</th>
                <th scope="col" className={head}>PMI</th>
                <td className="border-b border-[#a9aab2]" />
              </tr>
            </thead>
            <tbody>
              {cadViews.map((v, i) => {
                const cell = `border-b border-r border-[#d0d0d8] px-[3px] ${i === 0 ? 'bg-[#5891d4] text-white' : i % 2 ? 'bg-[#f6f4fe]' : 'bg-white'}`
                return (
                  <tr key={v.name} className="h-[101px]">
                    <td className="border-b border-r border-[#d0d0d8]">{v.thumb}</td>
                    <td className={cell}>{v.name}</td>
                    <td className={`${cell} text-center`}>{v.pmi}</td>
                    <td />
                  </tr>
                )
              })}
            </tbody>
          </table>
        </div>
        <footer className="h-[31px] shrink-0 border border-[#a9aab2] bg-linear-to-b from-[#ededf0] to-[#dfe0e5] pl-2.5 leading-[27px]">
          Total rows: 7 from 7, selected rows: 0
        </footer>
      </div>
    </aside>
  )
}

const App = (): ReactElement => (
  <div className="relative flex h-screen flex-col border border-[#48484c] bg-[#e2e3e8] font-['Roboto','Noto_Sans',sans-serif] text-[11px] leading-[13px] text-[#20203c]">
    <header className="flex h-[30px] shrink-0 items-center bg-[#3a3a3a] pb-px pl-[9px] text-white">
      <svg viewBox="0 0 14 15" className="h-[15px] w-3.5" aria-hidden="true">
        <rect width="14" height="15" rx="1" fill="#eadfe6" />
        <path d="M0 0h14v3H0z" fill="#3c5f9c" />
        <path d="M0 3h14v2H0z" fill="#9bb3d6" />
        <path d="M1 10h12v4H1z" fill="#c99aa8" />
        <path d="M2 12h10" stroke="#8d5a6c" strokeDasharray="1 1" />
      </svg>
      <h1 className="ml-1.5 font-['Noto_Sans',sans-serif]">Inspection Manager</h1>
      <div className="ml-auto flex items-center gap-9 pr-[18px]">
        <button type="button" aria-label="Minimize">
          <svg viewBox="0 0 10 10" className="size-2.5" stroke="#fff" aria-hidden="true"><path d="M0 5.500h10" /></svg>
        </button>
        <button type="button" aria-label="Maximize">
          <svg viewBox="0 0 10 10" className="size-2.5" fill="none" stroke="#fff" aria-hidden="true"><path d="M.5.5h9v9h-9z" /></svg>
        </button>
        <button type="button" aria-label="Close window">
          <svg viewBox="0 0 10 10" className="size-2.5" stroke="#fff" aria-hidden="true"><path d="M0 0l10 10M10 0L0 10" /></svg>
        </button>
      </div>
    </header>
    <Ribbon />
    <main className="flex min-h-0 flex-1 gap-[3px] pb-0.5 pl-px pr-[3px] pt-[3px]">
      <div className="grid min-w-0 flex-1 grid-rows-[487fr_427fr] gap-[3px]">
        <ModelPanel />
        <PmiPanel />
      </div>
      <ToolsPanel />
    </main>
    <div className="h-[25px] shrink-0 border-t border-[#b4b5bd] bg-linear-to-b from-[#dcdde2] to-[#c6c7ce]" />
    <p className="pointer-events-none absolute bottom-[34px] right-10 font-['Noto_Sans','Noto_Sans_CJK_SC',sans-serif] text-[48px] leading-[60px] text-white [text-shadow:2px_2px_1px_#8a8a8e,0_0_2px_#a0a0a4]">
      知乎 @3D开发HOOPS
    </p>
  </div>
)

export default App
